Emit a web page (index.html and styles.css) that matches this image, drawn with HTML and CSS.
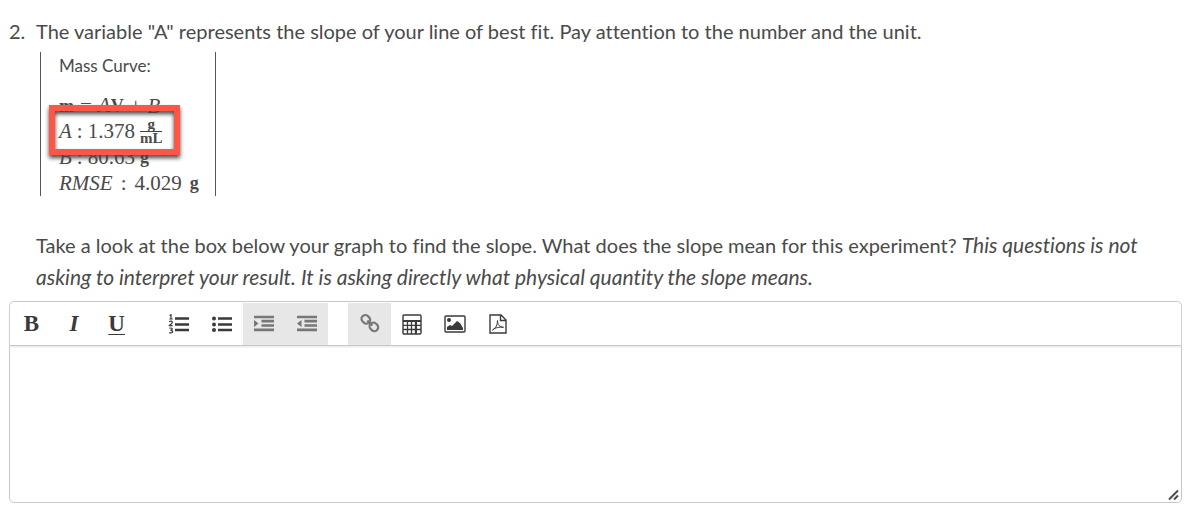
FILE: index.html
```html
<!DOCTYPE html>
<html lang="en">
<head>
<meta charset="utf-8">
<title>Question 2</title>
<link rel="stylesheet" href="styles.css">
</head>
<body>
<main class="question">
  <div class="prompt">
    <span class="number">2.</span>
    <div class="content">
      <p>The variable "A" represents the slope of your line of best fit. Pay attention to the number and the unit.</p>
      <div class="curve">
        <div class="curve-title">Mass Curve:</div>
        <div class="row equation"><span class="unit">m</span><span>=</span><span><i>A</i><span class="unit">V</span></span><span>+</span><i>B</i></div>
        <div class="row slope"><i>A</i><span>:</span><span>1.378</span><span class="fraction"><span class="top">g</span><span>mL</span></span><span class="highlight"></span></div>
        <div class="row"><i>B</i><span>:</span><span>80.63</span><span class="unit">g</span></div>
        <div class="row wide"><i>RMSE</i><span>:</span><span>4.029</span><span class="unit">g</span></div>
      </div>
      <p>Take a look at the box below your graph to find the slope. What does the slope mean for this experiment? <em>This questions is not asking to interpret your result. It is asking directly what physical quantity the slope means.</em></p>
    </div>
  </div>

  <div class="editor">
    <div class="toolbar" role="toolbar" aria-label="Formatting">
      <div class="group text-tools">
        <button type="button" class="tool letter" aria-label="Bold">B</button>
        <button type="button" class="tool letter italic" aria-label="Italic">I</button>
        <button type="button" class="tool letter underline" aria-label="Underline">U</button>
      </div>
      <div class="group list-tools">
        <button type="button" class="tool" aria-label="Numbered list">
          <svg width="22" height="20" viewBox="0 0 22 20"><path d="M7 4.500h14M7 10.500h14M7 16h14" stroke-width="2.400"/><path d="M1.500 1.500 3 .7V5M1.300 5h3.500M1.300 7.800c1-1 3-.8 3 .6 0 1.200-2 1.900-2.900 3.200h3.200M1.400 14.300c3-1 4 1.500 1 2 3.700.2 2.500 3.400-1.200 2.300" stroke-width="1.200"/></svg>
        </button>
        <button type="button" class="tool" aria-label="Bulleted list">
          <svg width="22" height="20" viewBox="0 0 22 20"><path d="M7 4.500h14M7 10.500h14M7 16h14" stroke-width="2.400"/><g class="solid"><circle cx="3" cy="4.500" r="2"/><circle cx="3" cy="10.500" r="2"/><circle cx="3" cy="16" r="2"/></g></svg>
        </button>
        <button type="button" class="tool" disabled aria-label="Indent">
          <svg width="22" height="20" viewBox="0 0 22 20"><path d="M1 3h20M8.500 7.200h12.500M8.500 11.500h12.500M1 15.800h20" stroke-width="2.700"/><path class="solid" d="M1 6 5.500 9.500 1 13z"/></svg>
        </button>
        <button type="button" class="tool" disabled aria-label="Outdent">
          <svg width="22" height="20" viewBox="0 0 22 20"><path d="M1 3h20M8.500 7.200h12.500M8.500 11.500h12.500M1 15.800h20" stroke-width="2.700"/><path class="solid" d="M5.500 6 1 9.500 5.500 13z"/></svg>
        </button>
      </div>
      <div class="group insert-tools">
        <button type="button" class="tool" disabled aria-label="Link">
          <svg width="22" height="22" viewBox="0 0 22 22"><g transform="rotate(43 11 11)" stroke-width="2.200"><rect x="1" y="6" width="9" height="7.500" rx="3.700"/><rect x="12" y="6" width="9" height="7.500" rx="3.700"/><path d="M7.500 9.700h7"/></g></svg>
        </button>
        <button type="button" class="tool" aria-label="Equation">
          <svg width="22" height="22" viewBox="0 0 22 22"><rect x="2" y="2" width="18" height="19" rx="1" stroke-width="1.400"/><path d="M2 8h18" stroke-width="2"/><path d="M2 12.300h18M2 16.500h18M6.500 8v13M10.500 8v13M14.500 8v13" stroke-width="1.300"/><path d="M15 8.500v12" stroke-width="2"/></svg>
        </button>
        <button type="button" class="tool" aria-label="Image">
          <svg width="22" height="22" viewBox="0 0 22 22"><rect x="1" y="3" width="20" height="16" rx="1" stroke-width="1.400"/><circle class="solid" cx="5" cy="7" r="2"/><path class="solid" d="M3 17v-3l3-2 2 1 5-5 3 2 3 5v2z"/></svg>
        </button>
        <button type="button" class="tool" aria-label="Document">
          <svg width="22" height="22" viewBox="0 0 22 22"><path d="M3 2h11l5 5v13H3zM13.500 2v5.500H19" stroke-width="1.400"/><path d="M10.500 7.500c.2 4.500 2 6.500 6 6.800-4.500-.6-8 .2-11 2.700 3.500-2 5-5 5-9.500z" stroke-width="1"/></svg>
        </button>
      </div>
    </div>
    <textarea class="answer" aria-label="Your answer"></textarea>
    <svg class="grip" width="12" height="12" viewBox="0 0 12 12"><path d="M1 10.500 10 1.500M6 10.500 10 6.500"/></svg>
  </div>
</main>
</body>
</html>
```
FILE: styles.css
```css
* { box-sizing: border-box; }
body {
  margin: 0;
  background: #fff;
  color: #4a4a4a;
  font: 20px/32px Lato, "Open Sans", sans-serif;
  font-variant-ligatures: none;
}
.question { padding: 15px 9px 9px; }
.prompt { display: flex; }
.number { flex: none; width: 27px; }
.content { flex: 1; }
p { margin: 0; }
em { font-size: 21px; line-height: 30px; }

.curve {
  width: 176px;
  margin: 5px 0 33px 4px;
  padding-left: 18px;
  border: solid #555;
  border-width: 0 1px;
}
.curve-title {
  margin-bottom: 13px;
  font-size: 17px;
  line-height: 28px;
}
.row {
  display: flex;
  align-items: center;
  gap: 5px;
  font: 21px/26px "Liberation Serif", serif;
}
.wide { gap: 8px; }
.equation { gap: 6px; line-height: 24px; }
.unit, .fraction { font-weight: bold; }
.unit { font-size: 18px; }
.slope { position: relative; }
.fraction {
  display: grid;
  margin: -1px 0;
  font-size: 15px;
  line-height: 13px;
  text-align: center;
}
.top { border-bottom: 1px solid #444; }
.highlight {
  position: absolute;
  inset: -13px 35px -11px -10px;
  border: 6px solid #fc5648;
  filter: drop-shadow(0 3px 2px #444);
}

.editor {
  position: relative;
  margin-top: 8px;
  border: 1px solid #c8c8c8;
  border-radius: 5px;
}
.toolbar {
  display: flex;
  gap: 20px;
  padding-top: 1px;
  border-bottom: 1px solid #c8c8c8;
  box-shadow: 0 1px 2px #e4e4e4;
}
.group { display: grid; grid-auto-flow: column; grid-auto-columns: 1fr; }
.text-tools { width: 128px; }
.list-tools { width: 170px; }
.insert-tools { width: 171px; }
.tool {
  display: grid;
  place-items: center;
  height: 42px;
  padding: 0;
  border: 0;
  background: none;
  color: #3a3a3a;
}
.tool:disabled { background: #e7e7e7; color: #777; }
.letter { font: bold 23px/26px "Liberation Serif", serif; }
.italic { font-style: italic; }
.underline { text-decoration: underline; text-decoration-thickness: 1px; text-underline-offset: 3px; }
svg { display: block; fill: none; stroke: currentColor; }
.solid { fill: currentColor; stroke: none; }
.answer {
  display: block;
  width: 100%;
  height: 156px;
  padding: 8px;
  border: 0;
  outline: 0;
  background: transparent;
  resize: none;
  color: inherit;
  font: inherit;
}
.grip { position: absolute; right: 1px; bottom: 1px; stroke-width: 2; }
```
